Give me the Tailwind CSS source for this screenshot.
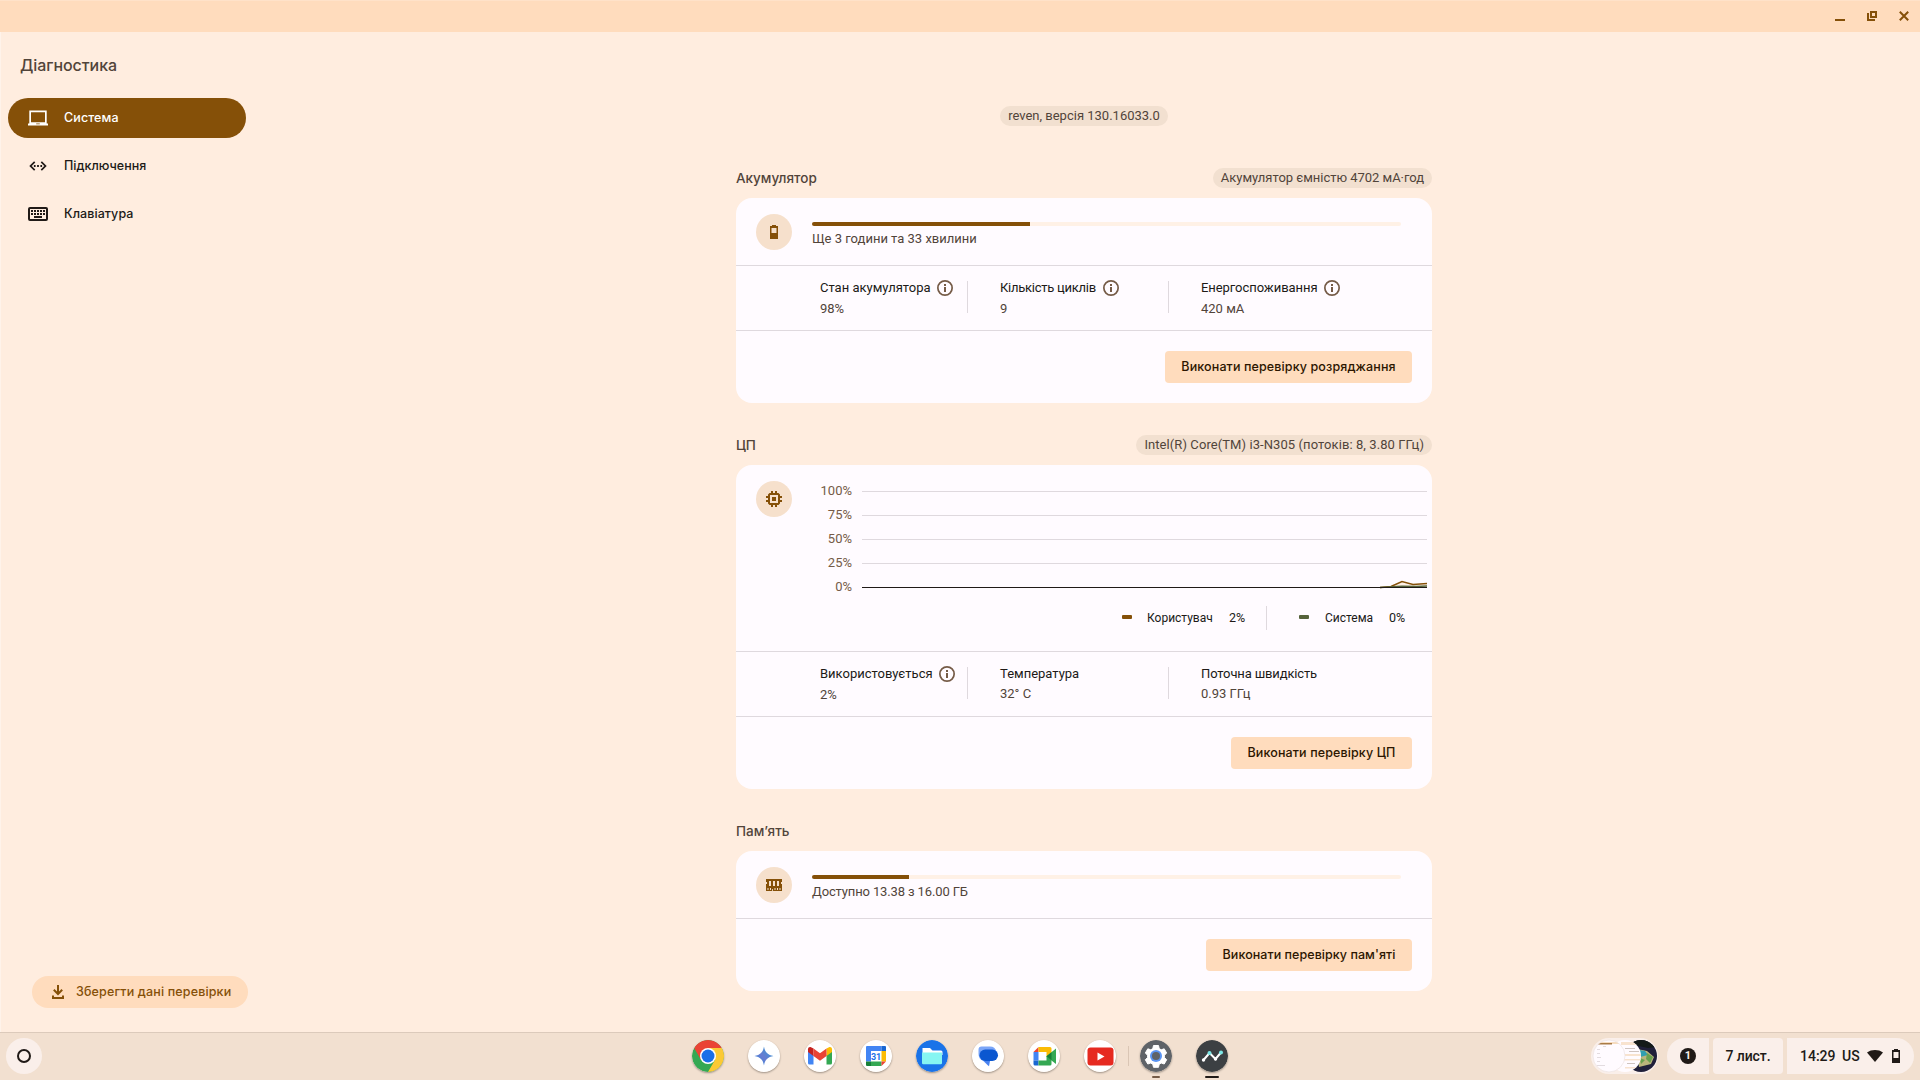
<!DOCTYPE html>
<html lang="uk">
<head>
    <meta charset="UTF-8">
    <meta name="viewport" content="width=device-width, initial-scale=1.0">
    <title>Діагностика</title>
    <script src="https://cdn.jsdelivr.net/npm/@tailwindcss/browser@4"></script>
</head>
<body class="w-[1920px] h-[1080px] overflow-hidden flex flex-col bg-[#ffeddf] font-[Roboto,sans-serif] text-[13px] leading-5 text-[#201a17]">
    <!-- window caption -->
    <header class="h-8 shrink-0 bg-[#ffdcbd] border-t border-[#ffe2c9] pr-[11px] flex justify-end items-center gap-[22px] text-[#855008]">
        <svg class="w-[10px] h-[10px] -mt-px" viewBox="0 0 10 10" fill="currentColor"><path d="M0 8h10v2H0z"/></svg>
        <svg class="w-[10px] h-[10px] -mt-px" viewBox="0 0 10 10" fill="currentColor"><path fill-rule="evenodd" d="M3 0h7v7H3zM5 2v3h3V2zM0 2h2v6h6v2H0z"/></svg>
        <svg class="w-[10px] h-[10px] -mt-px" viewBox="0 0 10 10" fill="none" stroke="currentColor" stroke-width="2"><path d="M.8.8l8.4 8.4M9.2.8L.8 9.2"/></svg>
    </header>

    <main class="flex-1 min-h-0 flex">
        <!-- sidebar -->
        <aside class="w-[256px] shrink-0 flex flex-col border-l border-[#fff3ea] pl-[7px] pb-6">
            <h1 class="mt-5 h-[46px] pl-3 pt-px font-[Inter,sans-serif] text-base leading-6 font-medium tracking-[-0.07px] text-[#51443a]">Діагностика</h1>
            <nav class="flex flex-col gap-2 font-[Inter,sans-serif] text-[12.5px] font-medium">
                <a class="w-[238px] h-10 pl-5 rounded-full bg-[#855008] text-white flex items-center gap-4 tracking-[0.1px]">
                    <svg class="w-5 h-5" viewBox="0 0 20 20" fill="currentColor"><path fill-rule="evenodd" d="M1.3 2.5h17.4v13H20v2H0v-2h1.3zM3 4.2v10.1h14V4.200zM8.200 15.500v.8h3.600v-.8z"/></svg>
                    Система
                </a>
                <a class="w-[238px] h-10 pl-5 flex items-center gap-4">
                    <svg class="w-5 h-5" viewBox="0 0 20 20" fill="currentColor"><path d="M6.100 5.200l1.200 1.200L3.700 10l3.600 3.600-1.200 1.200L1.300 10zM13.900 5.200l-1.200 1.200 3.600 3.600-3.600 3.600 1.200 1.200L18.700 10zM5.900 9.100h1.700v1.800H5.900zM9.100 9.100h1.800v1.800H9.100zM12.400 9.100h1.700v1.800h-1.700z"/></svg>
                    Підключення
                </a>
                <a class="w-[238px] h-10 pl-5 flex items-center gap-4 tracking-[0.08px]">
                    <svg class="w-5 h-5" viewBox="0 0 20 20" fill="currentColor"><path fill-rule="evenodd" d="M2 3h16a2 2 0 0 1 2 2v10a2 2 0 0 1-2 2H2a2 2 0 0 1-2-2V5a2 2 0 0 1 2-2zm0 2v10h16V5zM3 6h2v2H3zm3 0h2v2H6zm3 0h2v2H9zm3 0h2v2h-2zm3 0h2v2h-2zM3 9h2v2H3zm3 0h2v2H6zm3 0h2v2H9zm3 0h2v2h-2zm3 0h2v2h-2zM6 12h8v2H6z"/></svg>
                    Клавіатура
                </a>
            </nav>
            <button class="mt-auto ml-6 w-[216px] h-8 pl-[18px] rounded-full bg-[#ffdcbd] text-[#855008] font-[Inter,sans-serif] text-[12.5px] font-medium tracking-[0.15px] flex items-center gap-[10px]">
                <svg class="w-4 h-4" viewBox="0 0 16 16" fill="none" stroke="currentColor" stroke-width="2"><path d="M8 1v8.500M3.800 5.800L8 10l4.200-4.200M3 11.500V14h10v-2.500"/></svg>
                <span>Зберегти дані перевірки</span>
            </button>
        </aside>

        <!-- system page -->
        <section class="ml-[480px] w-[696px] flex flex-col text-[#51443a]">
            <div class="mt-[74px] h-5 self-center px-2 rounded-full bg-[#f2e0d0] w-[168px] text-center whitespace-nowrap">reven, версія 130.16033.0</div>

            <div class="mt-[42px] h-5 flex justify-between items-center">
                <h2 class="font-[Inter,sans-serif] text-[13.5px] font-medium">Акумулятор</h2>
                <span class="px-2 rounded-full bg-[#f2e0d0] tracking-[-0.03px] whitespace-nowrap">Акумулятор ємністю 4702 мА·год</span>
            </div>
            <div class="mt-[10px] h-[205px] rounded-2xl bg-[#fffbff] flex flex-col">
                <div class="h-[67px] flex pl-5 pt-4">
                    <div class="w-9 h-9 rounded-full bg-[#f6e0cc] text-[#855008] flex justify-center items-center">
                        <svg class="w-2 h-[14px]" viewBox="0 0 8 14" fill="currentColor"><path fill-rule="evenodd" d="M2 0h4v1h2v13H0V1h2zM1.500 3v5h5V3z"/></svg>
                    </div>
                    <div class="ml-5 mt-2 w-[589px]">
                        <div class="h-1 rounded-full bg-[#fff1e6]"><div class="h-1 rounded-l-full bg-[#855008]" style="width: 37%"></div></div>
                        <p class="mt-[3px]">Ще 3 години та 33 хвилини</p>
                    </div>
                </div>
                <div class="h-[65px] border-t border-[#dfd9de] pt-[15px] pl-[84px] flex">
                    <div class="w-[148px] h-8 border-r border-[#dfd9de]">
                        <p class="h-5 -mt-[3px] flex items-center gap-[6px] text-[#201a17]">Стан акумулятора
                            <svg class="w-4 h-4 text-[#755b47]" viewBox="0 0 16 16" fill="currentColor"><path fill-rule="evenodd" d="M8 0a8 8 0 1 0 0 16A8 8 0 0 0 8 0zm0 1.700a6.300 6.300 0 1 1 0 12.600A6.300 6.300 0 0 1 8 1.700zM7 4h2v2H7zm0 3h2v5H7z"/></svg></p>
                        <p class="mt-[1px]">98%</p>
                    </div>
                    <div class="w-[201px] h-8 pl-8 border-r border-[#dfd9de]">
                        <p class="h-5 -mt-[3px] flex items-center gap-[7px] text-[#201a17]"><span class="tracking-[-0.25px]">Кількість циклів</span>
                            <svg class="w-4 h-4 text-[#755b47]" viewBox="0 0 16 16" fill="currentColor"><path fill-rule="evenodd" d="M8 0a8 8 0 1 0 0 16A8 8 0 0 0 8 0zm0 1.700a6.300 6.300 0 1 1 0 12.600A6.300 6.300 0 0 1 8 1.700zM7 4h2v2H7zm0 3h2v5H7z"/></svg></p>
                        <p class="mt-[1px]">9</p>
                    </div>
                    <div class="pl-8">
                        <p class="h-5 -mt-[3px] flex items-center gap-[6px] text-[#201a17]"><span class="tracking-[-0.06px]">Енергоспоживання</span>
                            <svg class="w-4 h-4 text-[#755b47]" viewBox="0 0 16 16" fill="currentColor"><path fill-rule="evenodd" d="M8 0a8 8 0 1 0 0 16A8 8 0 0 0 8 0zm0 1.700a6.300 6.300 0 1 1 0 12.600A6.300 6.300 0 0 1 8 1.700zM7 4h2v2H7zm0 3h2v5H7z"/></svg></p>
                        <p class="mt-[1px]">420 мА</p>
                    </div>
                </div>
                <div class="flex-1 border-t border-[#dfd9de] pt-5 pr-5 flex justify-end">
                    <button class="w-[247px] h-8 rounded-[4px] bg-[#ffdcbd] text-[#2c1600] font-[Inter,sans-serif] text-[12.5px] font-medium tracking-[0.12px] whitespace-nowrap">Виконати перевірку розряджання</button>
                </div>
            </div>

            <div class="mt-8 h-5 flex justify-between items-center">
                <h2 class="font-[Inter,sans-serif] text-[13.5px] font-medium tracking-[-0.1px]">ЦП</h2>
                <span class="px-2 rounded-full bg-[#f2e0d0] tracking-[0.08px] whitespace-nowrap">Intel(R) Core(TM) i3-N305 (потоків: 8, 3.80 ГГц)</span>
            </div>
            <div class="mt-[10px] h-[324px] rounded-2xl bg-[#fffbff] flex flex-col">
                <div class="h-[186px] pl-5 pt-4 flex">
                    <div class="w-9 h-9 rounded-full bg-[#f6e0cc] text-[#855008] flex justify-center items-center">
                        <svg class="w-4 h-4" viewBox="0 0 16 16" fill="currentColor"><path fill-rule="evenodd" d="M5 0h2v2h2V0h2v2h1.500L14 3.500V5h2v2h-2v2h2v2h-2v1.500L12.500 14H11v2H9v-2H7v2H5v-2H3.500L2 12.500V11H0V9h2V7H0V5h2V3.500L3.500 2H5zM4 4v8h8V4zM6 6h4v4H6z"/></svg>
                    </div>
                    <div class="ml-5 flex-1">
                        <div class="flex items-start">
                            <div class="w-10 flex flex-col text-right leading-6 text-[#755b47] -mt-[2px]">
                                <span>100%</span>
                                <span>75%</span>
                                <span>50%</span>
                                <span>25%</span>
                                <span>0%</span>
                            </div>
                            <svg class="ml-[10px] mt-[10px] w-[565px] h-[98px]" viewBox="0 0 565 98">
                                <g fill="#dfd9de"><path d="M0 0h565v1H0zM0 24h565v1H0zM0 48h565v1H0zM0 72h565v1H0z"/></g>
                                <path d="M518 96.500L529 95.500l11-5 11 3 14-1V97h-47z" fill="#fff1e6"/>
                                <path d="M518 96.500L529 95.500l11-5 11 3 14-1" fill="none" stroke="#855008" stroke-width="1.500"/>
                                <path d="M518 96.500l22-1.200 14 .2 11-.5" fill="none" stroke="#56633b" stroke-width="1.500"/>
                                <path d="M0 96h565v1H0z" fill="#201a17"/>
                            </svg>
                        </div>
                        <div class="mt-[7px] mr-[24px] h-6 flex justify-end items-center text-xs text-[#201a17]">
                            <i class="w-[10px] h-1 rounded-[1px] bg-[#855008] mr-[15px] -mt-[2px]"></i>
                            <span class="w-[82px]">Користувач</span>
                            <span class="w-[37px] text-[12.5px]">2%</span>
                            <i class="w-px h-6 bg-[#dfd9de] mr-8"></i>
                            <i class="w-[10px] h-1 rounded-[1px] bg-[#56633b] mr-4 -mt-[2px]"></i>
                            <span class="w-16">Система</span>
                            <span class="w-[19px] text-[12.5px]">0%</span>
                        </div>
                    </div>
                </div>
                <div class="h-[65px] border-t border-[#dfd9de] pt-[15px] pl-[84px] flex">
                    <div class="w-[148px] h-8 border-r border-[#dfd9de]">
                        <p class="h-5 -mt-[3px] flex items-center gap-[6px] text-[#201a17]">Використовується
                            <svg class="w-4 h-4 text-[#755b47]" viewBox="0 0 16 16" fill="currentColor"><path fill-rule="evenodd" d="M8 0a8 8 0 1 0 0 16A8 8 0 0 0 8 0zm0 1.700a6.300 6.300 0 1 1 0 12.600A6.300 6.300 0 0 1 8 1.700zM7 4h2v2H7zm0 3h2v5H7z"/></svg></p>
                        <p class="mt-[1px]">2%</p>
                    </div>
                    <div class="w-[201px] h-8 pl-8 border-r border-[#dfd9de]">
                        <p class="-mt-[3px] text-[#201a17]">Температура</p>
                        <p>32° C</p>
                    </div>
                    <div class="pl-8">
                        <p class="-mt-[3px] text-[#201a17] tracking-[-0.14px]">Поточна швидкість</p>
                        <p>0.93 ГГц</p>
                    </div>
                </div>
                <div class="flex-1 border-t border-[#dfd9de] pt-5 pr-5 flex justify-end">
                    <button class="w-[181px] h-8 rounded-[4px] bg-[#ffdcbd] text-[#2c1600] font-[Inter,sans-serif] text-[12.5px] font-medium tracking-[0.12px] whitespace-nowrap">Виконати перевірку ЦП</button>
                </div>
            </div>

            <div class="mt-8 h-5 flex items-center">
                <h2 class="font-[Inter,sans-serif] text-[13.5px] font-medium">Пам’ять</h2>
            </div>
            <div class="mt-[10px] h-[140px] rounded-2xl bg-[#fffbff] flex flex-col">
                <div class="h-[67px] flex pl-5 pt-4">
                    <div class="w-9 h-9 rounded-full bg-[#f6e0cc] text-[#855008] flex justify-center items-center">
                        <svg class="w-4 h-3" viewBox="0 0 16 12" fill="currentColor"><path fill-rule="evenodd" d="M0 0h16v3h-1v2h1v7H0V5h1V3H0zM3 2v5h2V2zM7 2v5h2V2zM11 2v5h2V2zM1.500 9v2h1V9zM4 9v2h1V9zM6.200 10v2h.8v-2zM8.500 9v2h1V9zM11 9v2h1V9zM13.500 9v2h1V9z"/></svg>
                    </div>
                    <div class="ml-5 mt-2 w-[589px]">
                        <div class="h-1 rounded-full bg-[#fff1e6]"><div class="h-1 rounded-l-full bg-[#855008]" style="width: 16.4%"></div></div>
                        <p class="mt-[3px] tracking-[-0.13px]">Доступно 13.38 з 16.00 ГБ</p>
                    </div>
                </div>
                <div class="flex-1 border-t border-[#dfd9de] pt-5 pr-5 flex justify-end">
                    <button class="w-[206px] h-8 rounded-[4px] bg-[#ffdcbd] text-[#2c1600] font-[Inter,sans-serif] text-[12.5px] font-medium tracking-[0.05px] whitespace-nowrap">Виконати перевірку пам'яті</button>
                </div>
            </div>
        </section>
    </main>

    <!-- shelf -->
    <footer class="relative h-12 shrink-0 bg-[#f2e0d0] border-t border-[#dccabb] flex items-center justify-between pl-[6px] pr-[6px] pb-px">
        <div class="w-9 h-9 rounded-full bg-[#faefea] flex justify-center items-center">
            <div class="w-[14px] h-[14px] rounded-full border-2 border-[#201a17]"></div>
        </div>

        <div class="absolute left-[691.5px] top-0 h-[47px] flex items-start pt-[6.5px]">
            <!-- Chrome -->
            <svg class="w-8 h-8 mr-6 rounded-full shadow-[0_1px_2px_rgba(0,0,0,0.35)]" viewBox="0 0 32 32">
                <circle cx="16" cy="16" r="16" fill="#34a853"/>
                <path d="M16 8h13.860A16 16 0 0 1 16 32l6.930-12z" fill="#fbc934"/>
                <path d="M2.140 8A16 16 0 0 1 29.860 8H16l-6.930 12z" fill="#ea4335"/>
                <circle cx="16" cy="16" r="8" fill="#fff"/><circle cx="16" cy="16" r="6.500" fill="#1a6fe8"/>
            </svg>
            <!-- Gemini -->
            <svg class="w-8 h-8 mr-6 rounded-full shadow-[0_1px_2px_rgba(0,0,0,0.35)]" viewBox="0 0 32 32">
                <defs><linearGradient id="spark" x1="0" y1="1" x2="1" y2="0"><stop offset="0" stop-color="#1c8fe0"/><stop offset=".45" stop-color="#6a7bd0"/><stop offset="1" stop-color="#2aa0d8"/></linearGradient></defs>
                <circle cx="16" cy="16" r="16" fill="#fff"/>
                <path d="M16 6.500c.8 5.500 4 8.700 9.500 9.500-5.500.8-8.700 4-9.500 9.500-.8-5.500-4-8.700-9.500-9.500 5.500-.8 8.700-4 9.500-9.500z" fill="url(#spark)"/>
            </svg>
            <!-- Gmail -->
            <svg class="w-8 h-8 mr-6 rounded-full shadow-[0_1px_2px_rgba(0,0,0,0.35)]" viewBox="0 0 32 32">
                <circle cx="16" cy="16" r="16" fill="#fff"/>
                <path d="M4 11l5.500 4v9.500H5.500A1.500 1.500 0 0 1 4 23z" fill="#4285f4"/>
                <path d="M28 11l-5.500 4v9.500h4A1.500 1.500 0 0 0 28 23z" fill="#34a853"/>
                <path d="M22.500 8.500L25 7.200c1.500-.7 3 .3 3 2V12l-5.500 4z" fill="#fbbc04"/>
                <path d="M9.500 8.500L7 7.200c-1.500-.7-3 .3-3 2V12l5.500 4z" fill="#c5221f"/>
                <path d="M9.500 8.500L16 13.300l6.500-4.800V16L16 20.800 9.500 16z" fill="#ea4335"/>
            </svg>
            <!-- Calendar -->
            <svg class="w-8 h-8 mr-6 rounded-full shadow-[0_1px_2px_rgba(0,0,0,0.35)]" viewBox="0 0 32 32">
                <circle cx="16" cy="16" r="16" fill="#fff"/>
                <path d="M7 6h14.500v5H11v10.500H6V7a1 1 0 0 1 1-1z" fill="#4285f4"/>
                <path d="M21.500 6H25a1 1 0 0 1 1 1v4h-4.500z" fill="#1967d2"/>
                <path d="M21.500 11H26v10.500h-4.500z" fill="#fbbc04"/>
                <path d="M11 21.500h10.500V26H11z" fill="#34a853"/><path d="M6 21.500h5V26H7a1 1 0 0 1-1-1z" fill="#188038"/>
                <path d="M21.500 21.500H26L21.500 26z" fill="#ea4335"/>
                <text x="16.100" y="19.600" text-anchor="middle" font-size="9" font-weight="700" font-family="Roboto, sans-serif" fill="#1a73e8">31</text>
            </svg>
            <!-- Files -->
            <svg class="w-8 h-8 mr-6 rounded-full shadow-[0_1px_2px_rgba(0,0,0,0.35)]" viewBox="0 0 32 32">
                <circle cx="16" cy="16" r="16" fill="#1a73e8"/>
                <path d="M6.500 8h7.500l2.500 2.500H25a1.500 1.500 0 0 1 1.500 1.500v3H6.500z" fill="#fff"/>
                <path d="M6 12.500h20V23a1.200 1.200 0 0 1-1.200 1.200H7.200A1.200 1.200 0 0 1 6 23z" fill="#86f5f2"/>
            </svg>
            <!-- Messages -->
            <svg class="w-8 h-8 mr-6 rounded-full shadow-[0_1px_2px_rgba(0,0,0,0.35)]" viewBox="0 0 32 32">
                <circle cx="16" cy="16" r="16" fill="#fff"/>
                <path d="M9.500 6.500h8.500a6.500 6.500 0 0 1 6.300 5L16.500 20v6L11 20.800A7.500 7.500 0 0 1 6.500 14V9.500a3 3 0 0 1 3-3z" fill="#7ba6f8"/>
                <path d="M12 21h6l-1 5.300z" fill="#4a82ee"/>
                <rect x="7.500" y="9.500" width="18.500" height="11.500" rx="5.700" fill="#0b57d0"/>
            </svg>
            <!-- Meet -->
            <svg class="w-8 h-8 mr-6 rounded-full shadow-[0_1px_2px_rgba(0,0,0,0.35)]" viewBox="0 0 32 32">
                <circle cx="16" cy="16" r="16" fill="#fff"/>
                <path d="M10.500 7v5H5.500z" fill="#ea4335"/><path d="M5.500 12h5v8.500h-5z" fill="#4285f4"/>
                <path d="M5.500 20.500h5v5H7a1.500 1.500 0 0 1-1.500-1.500z" fill="#1967d2"/>
                <path d="M10.500 7H22a1.500 1.500 0 0 1 1.500 1.500V13l-5 4v-5h-8z" fill="#fbbc04"/>
                <path d="M10.500 20.500h8V16l5 3.500V24a1.500 1.500 0 0 1-1.500 1.500H10.500z" fill="#34a853"/>
                <path d="M18.500 16.200L28 8.500v15.500l-4.500-3.500z" fill="#34a853"/><path d="M18.500 16.200l5-4v8z" fill="#188038"/>
            </svg>
            <!-- YouTube -->
            <svg class="w-8 h-8 mr-3 rounded-full shadow-[0_1px_2px_rgba(0,0,0,0.35)]" viewBox="0 0 32 32">
                <circle cx="16" cy="16" r="16" fill="#fff"/>
                <rect x="3.500" y="7.500" width="26" height="18" rx="3" fill="#e62a20"/><path d="M13.500 12.500l7 4-7 4z" fill="#fff"/>
            </svg>
            <i class="w-px h-5 mt-[6.5px] bg-[#dac6b5] mr-[11px]"></i>
            <!-- Settings -->
            <div class="w-8 mr-6">
                <svg class="w-8 h-8 rounded-full shadow-[0_1px_2px_rgba(0,0,0,0.35)]" viewBox="0 0 32 32">
                    <circle cx="16" cy="16" r="16" fill="#5f6368"/>
                    <path d="M13.500 5.500h5l.7 3.100 2 1.200 3-1 2.500 4.300-2.300 2.100v2.400l2.300 2.100-2.500 4.300-3-1-2 1.200-.7 3.100h-5l-.7-3.100-2-1.200-3 1-2.500-4.300 2.300-2.100v-2.400L5.300 13.100l2.500-4.300 3 1 2-1.200z" fill="#fff" stroke="#fff" stroke-linejoin="round"/>
                    <circle cx="16" cy="16" r="6" fill="#5a94f2"/><circle cx="16" cy="16" r="4" fill="#5f6368"/>
                </svg>
                <i class="block mx-auto mt-1 w-2 h-[2px] rounded-full bg-[#755b47]"></i>
            </div>
            <!-- Diagnostics -->
            <div class="w-8">
                <svg class="w-8 h-8 rounded-full shadow-[0_1px_2px_rgba(0,0,0,0.35)]" viewBox="0 0 32 32">
                    <circle cx="16" cy="16" r="16" fill="#3c4043"/>
                    <path d="M7.500 20l6-7 6 6L25 12.500" fill="none" stroke="#fff" stroke-width="2"/>
                    <g fill="#fff"><circle cx="7.500" cy="20" r="1.700"/><circle cx="19.500" cy="19" r="1.700"/></g>
                    <g fill="#7ce8e8"><circle cx="13.500" cy="13" r="2"/><circle cx="25" cy="12.500" r="2"/></g>
                </svg>
                <i class="block mx-auto mt-1 w-[14px] h-[2px] rounded-full bg-[#201a17]"></i>
            </div>
        </div>

        <div class="flex items-center gap-1 font-medium text-sm">
            <!-- recent captures -->
            <svg class="w-[67px] h-9 mr-[5px]" viewBox="0 0 67 36">
                <defs>
                    <clipPath id="shotA"><circle cx="18" cy="18" r="16"/></clipPath>
                    <clipPath id="shotB"><circle cx="34" cy="18" r="16"/></clipPath>
                    <clipPath id="shotC"><circle cx="50" cy="18" r="16"/></clipPath>
                </defs>
                <rect width="67" height="36" rx="18" fill="#faefea"/>
                <g clip-path="url(#shotC)">
                    <path d="M30 0h37v36H30z" fill="#20203a"/><path d="M40 0h27v9l-10 1-14-3z" fill="#141a18"/>
                    <path d="M46 11l10 2 7 6-3 7-12 3z" fill="#b9b57c"/><path d="M48 12l6 1 3 4-8 2z" fill="#2f9fb0"/><path d="M56 15l6 4-3 6-4-4zM49 20l5 2-4 4z" fill="#69a04e"/>
                </g>
                <g clip-path="url(#shotB)">
                    <path d="M17 0h34v36H17z" fill="#fffbff"/><path d="M30 4h20v3H30zM32 16h18v2H32zM32 21h18v1.500H32zM34 29h14v1.500H34z" fill="#f8e3cf"/><path d="M34 10h10v1H34zM38 13h10v1H38zM36 25h8v1H36z" fill="#cfc4c0"/>
                </g>
                <g clip-path="url(#shotA)">
                    <path d="M0 0h36v36H0z" fill="#fffbff"/><path d="M0 4h36v2H0z" fill="#f6dcc0"/><path d="M7 5h14v1.500H7z" fill="#a97b46"/>
                    <path d="M6 11h3v1H6zM6 15h3v1H6zM6 19h4v1H6zM6 23h3v1H6zM6 27h8v1H6zM12 8h3v1h-3z" fill="#e3dce0"/>
                </g>
                <circle cx="18" cy="18" r="16" fill="none" stroke="#eadfdd" stroke-width=".6"/>
            </svg>
            <div class="w-[42px] h-9 rounded-l-full rounded-r-[4px] bg-[#faefea] flex justify-center items-center">
                <span class="w-4 h-4 rounded-full bg-[#201a17] text-[#faefea] text-[11px] leading-4 font-bold text-center">1</span>
            </div>
            <div class="w-[70px] h-9 rounded-[4px] bg-[#faefea] flex justify-center items-center tracking-[-0.1px]">7 лист.</div>
            <div class="w-[127px] h-9 rounded-l-[4px] rounded-r-full bg-[#faefea] flex items-center pl-[13px]">
                <span class="w-[42px]">14:29</span>
                <span class="w-[25px]">US</span>
                <svg class="w-4 h-3 mr-[9px]" viewBox="0 0 16 12" fill="currentColor"><path d="M0 2.500C4.500-.8 11.500-.8 16 2.500L8 12z"/></svg>
                <svg class="w-2 h-[14px]" viewBox="0 0 8 14" fill="currentColor"><path fill-rule="evenodd" d="M2 0h4v1h2v13H0V1h2zM1.500 3v6h5V3z"/></svg>
            </div>
        </div>
    </footer>
</body>
</html>
